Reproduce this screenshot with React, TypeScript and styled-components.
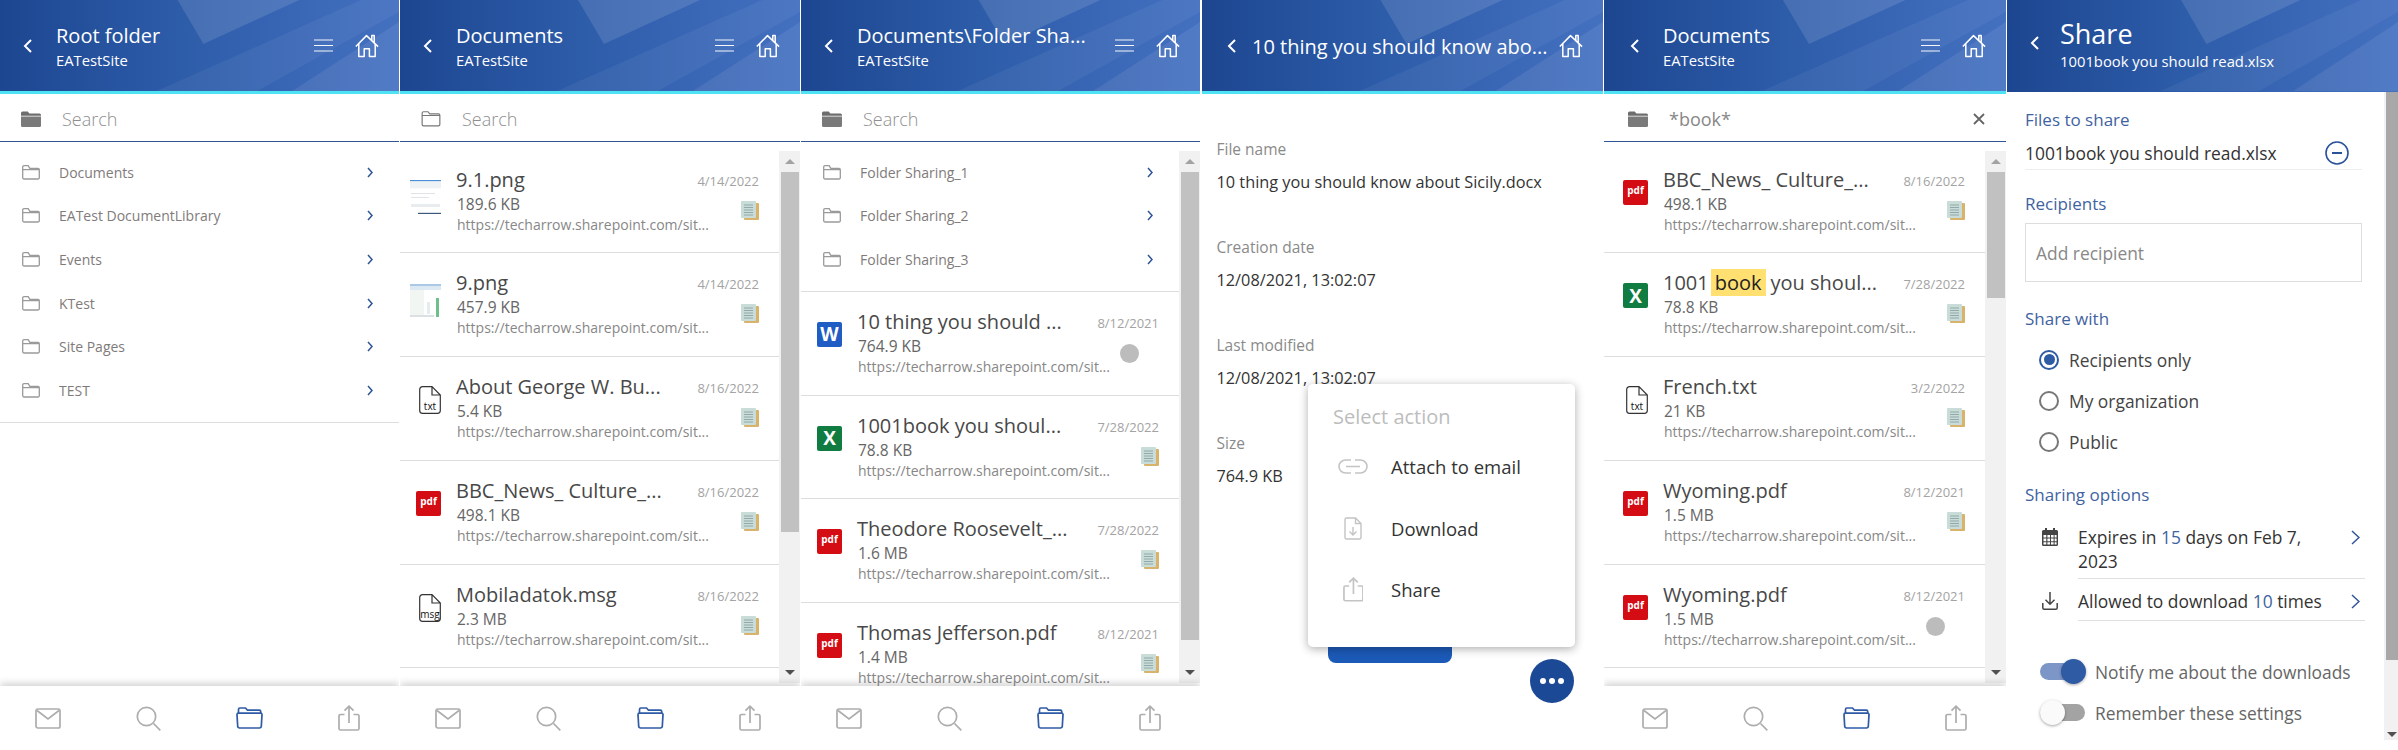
import React from "react";
import styled, { createGlobalStyle } from "styled-components";

const Global = createGlobalStyle`
  html, body { margin: 0; padding: 0; background: #fff; }
  body { font-family: "Open Sans", "Liberation Sans", sans-serif; overflow: hidden; }
  * { box-sizing: border-box; }
`;

const Page = styled.div`
  display: flex;
  width: 2398px;
  height: 750px;
  overflow: hidden;
`;

const Panel = styled.section<{ $w: number; $gap: number; $inset?: number }>`
  --inset: ${(p) => p.$inset ?? 0}px;
  position: relative;
  flex: none;
  width: ${(p) => p.$w}px;
  height: 750px;
  border-right: ${(p) => p.$gap}px solid #fff;
  display: flex;
  flex-direction: column;
  overflow: hidden;
  background: #fff;
`;

const HeaderBar = styled.header<{ $bare?: boolean }>`
  position: relative;
  flex: none;
  height: ${(p) => (p.$bare ? 92 : 94)}px;
  display: flex;
  align-items: center;
  padding: ${(p) => (p.$bare ? "0 20px 6px var(--inset)" : "0 20px 0 var(--inset)")};
  background: linear-gradient(90deg, #1d4690 0%, #2d5ca9 45%, #4470c0 100%);
  border-bottom: ${(p) => (p.$bare ? "0" : "3px solid #4de3f5")};
  color: #fff;
`;

const HeaderArt = styled.svg`
  position: absolute;
  inset: 0;
  width: 100%;
  height: 91px;
`;

const BackSlot = styled.div<{ $w?: number }>`
  position: relative;
  flex: none;
  width: ${(p) => p.$w ?? 56}px;
  padding-left: 23px;
  display: flex;
  align-items: center;
`;

const TitleBlock = styled.div`
  position: relative;
  flex: 1;
  min-width: 0;
  margin-top: 2px;
`;

const Title = styled.div<{ $big?: boolean }>`
  font-size: ${(p) => (p.$big ? 27 : 20)}px;
  line-height: ${(p) => (p.$big ? 32 : 26)}px;
  white-space: nowrap;
`;

const Subtitle = styled.div`
  font-size: 14.8px;
  line-height: 20px;
  margin-top: 1px;
  white-space: nowrap;
`;

const HeaderIcons = styled.div`
  position: relative;
  flex: none;
  display: flex;
  align-items: center;
  gap: 22px;
`;

const SearchBar = styled.div`
  flex: none;
  height: 48px;
  display: flex;
  align-items: center;
  padding: 3px 21px 0 calc(21px + var(--inset));
  gap: 21px;
  border-bottom: 1px solid #2f5597;
`;

const SearchText = styled.div<{ $filled?: boolean }>`
  flex: 1;
  font-size: 18px;
  font-weight: ${(p) => (p.$filled ? 400 : 300)};
  color: ${(p) => (p.$filled ? "#888" : "#8f8f8f")};
`;

const ListArea = styled.div`
  flex: 1;
  min-height: 0;
  display: flex;
  align-items: stretch;
`;

const List = styled.div`
  flex: 1;
  min-width: 0;
  padding-top: 7.5px;
`;

const FolderGroup = styled.div`
  padding: 1px 0 9.5px;
  border-bottom: 1px solid #ddd;
`;

const FolderRow = styled.div`
  height: 43.6px;
  display: flex;
  align-items: center;
  padding: 0 26px 0 calc(22px + var(--inset));
`;

const FolderName = styled.div`
  flex: 1;
  margin-left: 19px;
  font-size: 14px;
  color: #7f7b7b;
`;

const FileRow = styled.div`
  height: 103.75px;
  display: grid;
  grid-template-columns: 56px 1fr auto;
  padding: 0 20px 0 var(--inset);
  border-bottom: 1px solid #ddd;
`;

const FileIconCell = styled.div`
  display: flex;
  justify-content: flex-end;
  align-items: flex-start;
  padding: 30px 15px 0 0;
`;

const FileMain = styled.div`
  padding-top: 16px;
  min-width: 0;
  white-space: nowrap;
`;

const FileName = styled.div`
  font-size: 20px;
  line-height: 28px;
  color: #484848;
`;

const Mark = styled.mark`
  background: #ffe071;
  color: #222;
  padding: 0 4px;
  margin: 0 5px 0 2px;
`;

const FileSize = styled.div`
  font-size: 15.5px;
  line-height: 20px;
  color: #666;
  padding-left: 1px;
`;

const FileUrl = styled.div`
  font-size: 14px;
  line-height: 22px;
  color: #878787;
  padding-left: 1px;
`;

const FileSide = styled.div`
  display: flex;
  flex-direction: column;
  align-items: flex-end;
  padding-top: 21px;
`;

const FileDate = styled.div`
  font-size: 13px;
  line-height: 20px;
  color: #a3a3a3;
`;

const StatusDot = styled.div`
  width: 19px;
  height: 19px;
  margin: 11px 20px 0 0;
  border-radius: 50%;
  background: #bcbcbc;
`;

const NoteSlot = styled.div`
  margin-top: 10px;
  line-height: 0;
`;

const ScrollTrack = styled.div<{ $mb: number }>`
  flex: none;
  width: 21px;
  margin: 9px 0 ${(p) => p.$mb}px;
  padding: 0 1px 0 2px;
  background: #f1f1f1;
  display: flex;
  flex-direction: column;
`;

const ScrollUp = styled.div`
  flex: none;
  height: 21px;
  display: flex;
  align-items: center;
  justify-content: center;

  &::before {
    content: "";
    border-left: 5px solid transparent;
    border-right: 5px solid transparent;
    border-bottom: 5px solid #a3a3a3;
  }
`;

const ScrollThumb = styled.div<{ $h: number; $c?: string }>`
  flex: none;
  height: ${(p) => p.$h}px;
  background: ${(p) => p.$c ?? "#c1c1c1"};
`;

const ScrollGap = styled.div`
  flex: 1;
`;

const ScrollDown = styled.div<{ $h?: number }>`
  flex: none;
  height: ${(p) => p.$h ?? 21}px;
  display: flex;
  align-items: center;
  justify-content: center;

  &::before {
    content: "";
    border-left: 5px solid transparent;
    border-right: 5px solid transparent;
    border-top: 5px solid #505050;
  }
`;

const BottomBar = styled.nav`
  position: relative;
  flex: none;
  height: 64px;
  display: flex;
  align-items: center;
  justify-content: space-between;
  padding: 0 39px 0 calc(35px + var(--inset));
  background: #fff;
  box-shadow: 0 -3px 7px rgba(0, 0, 0, 0.17);
`;

const DetailBody = styled.div`
  flex: 1;
  padding: 44px 0 0 14.5px;
  display: flex;
  flex-direction: column;
`;

const DetailField = styled.div`
  margin-bottom: 42px;
`;

const DetailLabel = styled.div`
  font-size: 15.5px;
  line-height: 22px;
  color: #8a8a8a;
  margin-bottom: 10px;
`;

const DetailValue = styled.div`
  font-size: 16.3px;
  line-height: 24px;
  color: #333;
`;

const HiddenButton = styled.div`
  position: absolute;
  left: 126px;
  top: 620px;
  width: 124px;
  height: 43px;
  border-radius: 8px;
  background: #1c5ab8;
`;

const ActionMenu = styled.div`
  position: absolute;
  left: 106px;
  top: 384px;
  width: 267px;
  height: 263px;
  padding: 21px 0 0;
  border-radius: 5px;
  background: #fff;
  box-shadow: 0 2px 10px rgba(0, 0, 0, 0.32);
`;

const MenuTitle = styled.div`
  font-size: 20px;
  line-height: 24px;
  margin: 0 0 0 25px;
  color: #bdbdbd;
`;

const MenuItem = styled.div`
  height: 61.5px;
  display: flex;
  align-items: center;
  padding-left: 30px;
  gap: 23px;
  font-size: 18.5px;
  color: #333;
`;

const MenuItems = styled.div`
  margin-top: 7px;
`;

const MenuIcon = styled.div`
  width: 30px;
  display: flex;
  justify-content: center;
`;

const Fab = styled.div`
  position: absolute;
  left: 328px;
  top: 659px;
  width: 44px;
  height: 44px;
  border-radius: 50%;
  background: #1c4995;
  display: flex;
  align-items: center;
  justify-content: center;
  gap: 3px;
`;

const FabDot = styled.span`
  width: 6px;
  height: 6px;
  border-radius: 50%;
  background: #fff;
`;

const ShareBody = styled.div`
  flex: 1;
  min-height: 0;
  display: flex;
`;

const ShareForm = styled.div`
  flex: 1;
  min-width: 0;
  padding: 15px 0 0 18px;
`;

const SectionLabel = styled.div<{ $mt?: number }>`
  font-size: 17px;
  line-height: 26px;
  color: #3f639f;
  margin-top: ${(p) => p.$mt ?? 0}px;
`;

const ShareFileRow = styled.div`
  width: 337px;
  height: 37px;
  display: flex;
  align-items: center;
  justify-content: space-between;
  padding: 3px 13px 0 0;
  font-size: 17.4px;
  color: #333;
  border-bottom: 1px solid #eee;
`;

const RecipientBox = styled.div`
  width: 337px;
  height: 59px;
  margin-top: 6px;
  padding-left: 10px;
  display: flex;
  align-items: center;
  font-size: 17.4px;
  color: #888;
  border: 1px solid #ddd;
`;

const RadioGroup = styled.div`
  margin-top: 7px;
  padding-left: 14px;
`;

const RadioRow = styled.div`
  height: 41px;
  display: flex;
  align-items: center;
  gap: 10px;
  font-size: 17.4px;
  color: #444;
`;

const RadioMark = styled.span<{ $on?: boolean }>`
  width: 20px;
  height: 20px;
  border-radius: 50%;
  border: 2px solid ${(p) => (p.$on ? "#2f5ba5" : "#777")};
  display: flex;
  align-items: center;
  justify-content: center;

  &::after {
    content: "";
    display: ${(p) => (p.$on ? "block" : "none")};
    width: 11px;
    height: 11px;
    border-radius: 50%;
    background: #2f5ba5;
  }
`;

const OptionRow = styled.div<{ $h: number }>`
  display: flex;
  align-items: flex-start;
  padding-left: 17px;
  height: ${(p) => p.$h}px;
`;

const OptionIcon = styled.div<{ $pt?: number }>`
  flex: none;
  width: 36px;
  height: 24px;
  margin-top: ${(p) => p.$pt ?? 0}px;
  display: flex;
  align-items: center;
`;

const OptionBody = styled.div<{ $pt?: number }>`
  flex: 1;
  height: 100%;
  width: 287px;
  display: flex;
  align-items: flex-start;
  justify-content: space-between;
  padding: ${(p) => p.$pt ?? 0}px 5px 0 0;
  font-size: 17.4px;
  line-height: 24px;
  color: #333;
  border-bottom: 1px solid #e2dfe2;
`;

const OptionList = styled.div`
  width: 340px;
  margin-top: 17px;
`;

const OptionChevron = styled.div`
  flex: none;
  height: 24px;
  display: flex;
  align-items: center;
`;

const Accent = styled.span`
  color: #3f639f;
`;

const ToggleRow = styled.div<{ $mt?: number }>`
  height: 41px;
  display: flex;
  align-items: center;
  padding-left: 15px;
  gap: 10px;
  font-size: 17.4px;
  color: #666;
  margin-top: ${(p) => p.$mt ?? 0}px;
`;

const Toggle = styled.span<{ $on?: boolean }>`
  position: relative;
  flex: none;
  width: 45px;
  height: 17px;
  border-radius: 9px;
  background: ${(p) => (p.$on ? "#7d96c8" : "#a3a3a3")};

  &::after {
    content: "";
    position: absolute;
    top: -4px;
    left: ${(p) => (p.$on ? "21px" : "0")};
    width: 25px;
    height: 25px;
    border-radius: 50%;
    background: ${(p) => (p.$on ? "#2f5ba5" : "#fafafa")};
    box-shadow: 0 1px 3px rgba(0, 0, 0, 0.35);
  }
`;

const SideTrack = styled.div`
  flex: none;
  width: 14px;
  height: 648px;
  display: flex;
  flex-direction: column;
  background: #f1f1f1;
  padding-left: 2px;
`;

const Badge = styled.div<{ $c: string; $small?: boolean }>`
  width: 25px;
  height: 25px;
  border-radius: 2px;
  background: ${(p) => p.$c};
  color: #fff;
  display: flex;
  align-items: center;
  justify-content: center;
  font-family: "Open Sans", sans-serif;
  font-weight: 700;
  font-size: ${(p) => (p.$small ? 10 : 19)}px;
  padding-bottom: ${(p) => (p.$small ? 5 : 0)}px;
`;

const DocWrap = styled.div`
  position: relative;
  width: 22px;
  height: 28px;
  margin-top: -1px;
`;

const DocExt = styled.span`
  position: absolute;
  left: 0;
  right: 0;
  top: 13px;
  text-align: center;
  font-size: 10px;
  line-height: 14px;
  color: #111;
`;

const Chev = ({ c = "#2f5597", w = 6, h = 11, sw = 1.5 }: { c?: string; w?: number; h?: number; sw?: number }) => (
  <svg width={w} height={h} viewBox={`0 0 ${w} ${h}`}>
    <polyline points={`1,1 ${w - 1},${h / 2} 1,${h - 1}`} fill="none" stroke={c} strokeWidth={sw} />
  </svg>
);

const Back = () => (
  <svg width="9" height="14" viewBox="0 0 9 14">
    <polyline points="8,1 2,7 8,13" fill="none" stroke="#fff" strokeWidth="2" />
  </svg>
);

const Burger = () => (
  <svg width="19" height="13" viewBox="0 0 19 13">
    <path d="M0 1h19M0 6.5h19M0 12h19" stroke="#fff" strokeWidth="1" opacity="0.95" />
  </svg>
);

const Home = () => (
  <svg width="24" height="24" viewBox="0 0 24 24" fill="none" stroke="#fff" strokeWidth="1.5" strokeLinejoin="round">
    <path d="M.8 12.5 11.5 1.6l11.6 11M16.8 6.5V1.4h2.4v7.6" />
    <path d="M3.8 10v12.4h5.4v-7.6h5.2v7.6h5.8V10" />
  </svg>
);

const FolderLine = ({ c = "#9a9a9a" }: { c?: string }) => (
  <svg width="18" height="15" viewBox="0 0 18 15" fill="none" stroke={c} strokeWidth="1.3">
    <path d="M.7 12.7V2A1.3 1.3 0 0 1 2 .7h4.2l1.6 2.6H16a1.3 1.3 0 0 1 1.3 1.3v8.1A1.3 1.3 0 0 1 16 14H2a1.3 1.3 0 0 1-1.3-1.3ZM.7 4.6h16.6" />
  </svg>
);

const FolderSearchLine = () => (
  <svg width="20" height="16" viewBox="0 0 18 15" fill="none" stroke="#777" strokeWidth="1.1">
    <path d="M.7 12.7V2A1.3 1.3 0 0 1 2 .7h4.2l1.6 2H16a1.3 1.3 0 0 1 1.3 1.3v8.7A1.3 1.3 0 0 1 16 14H2a1.3 1.3 0 0 1-1.3-1.3ZM.7 4.2h16.6" />
  </svg>
);

const FolderFull = () => (
  <svg width="20" height="16" viewBox="0 0 20 16">
    <path d="M0 2a1.5 1.5 0 0 1 1.5-1.5h5.2L8.4 2.6h10.1A1.5 1.5 0 0 1 20 4.1v.6H0Z" fill="#6d6d6d" />
    <path d="M0 5.6h20v8.9a1.5 1.5 0 0 1-1.5 1.5h-17A1.5 1.5 0 0 1 0 14.5Z" fill="#7a7a7a" />
  </svg>
);

const Mail = () => (
  <svg width="26" height="21" viewBox="0 0 26 21" fill="none" stroke="#adadad" strokeWidth="1.7">
    <rect x="1" y="1" width="24" height="19" rx="1.8" />
    <path d="M2 2.5 13 11 24 2.5" />
  </svg>
);

const Lens = () => (
  <svg width="25" height="25" viewBox="0 0 25 25" fill="none" stroke="#adadad" strokeWidth="1.7">
    <circle cx="10.5" cy="10.5" r="9.2" />
    <path d="m17.5 17.5 6.8 6.8" />
  </svg>
);

const OpenFolder = () => (
  <svg width="27" height="22" viewBox="0 0 27 22" fill="none" stroke="#2f5ba5" strokeWidth="1.7" strokeLinejoin="round">
    <path d="M2.5 6V2.4A1.4 1.4 0 0 1 3.9 1h5.6l2 2.2h11.8A1.4 1.4 0 0 1 24.7 4.6V7" />
    <path d="M1 7.6A1.4 1.4 0 0 1 2.4 6.2h22.2A1.4 1.4 0 0 1 26 7.6l-.7 11.6a1.8 1.8 0 0 1-1.8 1.8H3.5a1.8 1.8 0 0 1-1.8-1.8Z" />
  </svg>
);

const ShareGlyph = ({ c = "#adadad", s = 1 }: { c?: string; s?: number }) => (
  <svg width={22 * s} height={26 * s} viewBox="0 0 22 26" fill="none" stroke={c} strokeWidth={1.7 / s}>
    <path d="M6.5 9.5H2.6A1.6 1.6 0 0 0 1 11.1v12.3A1.6 1.6 0 0 0 2.6 25h16.8a1.6 1.6 0 0 0 1.6-1.6V11.1a1.6 1.6 0 0 0-1.6-1.6h-3.9" />
    <path d="M11 18V1.4M6.5 5.6 11 1.2l4.5 4.4" />
  </svg>
);

const LinkGlyph = () => (
  <svg width="30" height="15" viewBox="0 0 30 15" fill="none" stroke="#c4c4c4" strokeWidth="1.6">
    <path d="M13 1H7.5a6.5 6.5 0 0 0 0 13H13M17 1h5.5a6.5 6.5 0 0 1 0 13H17M8 7.5h14" />
  </svg>
);

const FileDown = () => (
  <svg width="18" height="23" viewBox="0 0 18 23" fill="none" stroke="#c4c4c4" strokeWidth="1.4">
    <path d="M11.5 1H2.4A1.4 1.4 0 0 0 1 2.4v18.2A1.4 1.4 0 0 0 2.4 22h13.2a1.4 1.4 0 0 0 1.4-1.4V6.5Zm0 0v5.5H17" />
    <path d="M9 10v8M5.5 14.5 9 18l3.5-3.5" />
  </svg>
);

const Note = () => (
  <svg width="18" height="19" viewBox="0 0 18 19">
    <rect x="3" y="2" width="15" height="17" rx="1" fill="#d9b36b" />
    <rect x="0" y="0" width="15" height="17" rx="1" fill="#c9dcd8" />
    <path d="M3 4h9M3 6.5h9M3 9h9M3 11.5h9M3 14h9" stroke="#8aa3a6" strokeWidth="0.9" />
  </svg>
);

const ThumbA = () => (
  <svg width="31" height="34" viewBox="0 0 31 34">
    <rect width="31" height="1.4" fill="#4d8fd6" />
    <rect y="1.4" width="31" height="7" fill="#eef2f5" />
    <rect x="1" y="13" width="24" height="1" fill="#dfe3e6" />
    <rect x="1" y="17" width="18" height="1" fill="#e2e5e8" />
    <rect x="1" y="24" width="29" height="3" fill="#e8ecee" />
    <rect x="8" y="32.8" width="23" height="1.2" fill="#3c5a80" />
  </svg>
);

const ThumbB = () => (
  <svg width="31" height="34" viewBox="0 0 31 34" style={{ marginTop: 1 }}>
    <rect width="31" height="2" fill="#a9c9e6" />
    <rect y="2" width="31" height="4" fill="#dce9f2" />
    <rect y="6" width="14" height="26" fill="#f2f6f3" />
    <rect x="26" y="14" width="3" height="19" fill="#6fbf8c" />
    <rect x="17" y="18" width="3" height="12" fill="#e5ecee" />
    <rect y="31" width="24" height="2" fill="#dbe0e2" />
  </svg>
);

const Doc = ({ ext }: { ext: string }) => (
  <DocWrap>
    <svg width="22" height="28" viewBox="0 0 22 28" fill="none" stroke="#333" strokeWidth="1.2">
      <path d="M13 .7H3.5A2.8 2.8 0 0 0 .7 3.5v21a2.8 2.8 0 0 0 2.8 2.8h15a2.8 2.8 0 0 0 2.8-2.8V9ZM13 .7V9h8.3" />
    </svg>
    <DocExt>{ext}</DocExt>
  </DocWrap>
);

const Pdf = () => <Badge $c="#d40c14" $small>pdf</Badge>;

const HeaderPattern = () => (
  <HeaderArt viewBox="0 0 400 91" preserveAspectRatio="none">
    <polygon points="178,0 204,44 300,0" fill="#fff" opacity="0.12" />
    <polygon points="157,91 362,0 400,0 400,12 258,91" fill="#fff" opacity="0.05" />
    <polygon points="293,91 400,22 400,91" fill="#fff" opacity="0.08" />
  </HeaderArt>
);

const AppHeader = ({ title, sub, burger = true }: { title: string; sub?: string; burger?: boolean }) => (
  <HeaderBar>
    <HeaderPattern />
    <BackSlot $w={sub ? 56 : 48}>
      <Back />
    </BackSlot>
    <TitleBlock>
      <Title>{title}</Title>
      {sub && <Subtitle>{sub}</Subtitle>}
    </TitleBlock>
    <HeaderIcons>
      {burger && <Burger />}
      <Home />
    </HeaderIcons>
  </HeaderBar>
);

const Search = ({ text = "Search", icon = "full", close }: { text?: string; icon?: string; close?: boolean }) => (
  <SearchBar>
    {icon === "full" ? <FolderFull /> : <FolderSearchLine />}
    <SearchText $filled={text !== "Search"}>{text}</SearchText>
    {close && (
      <svg width="12" height="12" viewBox="0 0 12 12">
        <path d="M1 1l10 10M11 1 1 11" stroke="#666" strokeWidth="1.8" />
      </svg>
    )}
  </SearchBar>
);

const Bottom = () => (
  <BottomBar>
    <Mail />
    <Lens />
    <OpenFolder />
    <ShareGlyph />
  </BottomBar>
);

const Scroll = ({ thumb, mb = 3 }: { thumb: number; mb?: number }) => (
  <ScrollTrack $mb={mb}>
    <ScrollUp />
    <ScrollThumb $h={thumb} />
    <ScrollGap />
    <ScrollDown />
  </ScrollTrack>
);

type FileData = { icon: React.ReactNode; name: React.ReactNode; size: string; date: string; dot?: boolean };

const URL_TEXT = "https://techarrow.sharepoint.com/sit...";

const File = ({ icon, name, size, date, dot }: FileData) => (
  <FileRow>
    <FileIconCell>{icon}</FileIconCell>
    <FileMain>
      <FileName>{name}</FileName>
      <FileSize>{size}</FileSize>
      <FileUrl>{URL_TEXT}</FileUrl>
    </FileMain>
    <FileSide>
      <FileDate>{date}</FileDate>
      {dot ? (
        <StatusDot />
      ) : (
        <NoteSlot>
          <Note />
        </NoteSlot>
      )}
    </FileSide>
  </FileRow>
);

const Folder = ({ name }: { name: string }) => (
  <FolderRow>
    <FolderLine />
    <FolderName>{name}</FolderName>
    <Chev />
  </FolderRow>
);

const Fields = [
  ["File name", "10 thing you should know about Sicily.docx"],
  ["Creation date", "12/08/2021, 13:02:07"],
  ["Last modified", "12/08/2021, 13:02:07"],
  ["Size", "764.9 KB"],
];

export default function App() {
  return (
    <Page>
      <Global />

      <Panel $w={400} $gap={1}>
        <AppHeader title="Root folder" sub="EATestSite" />
        <Search />
        <ListArea>
          <List>
            <FolderGroup>
              {["Documents", "EATest DocumentLibrary", "Events", "KTest", "Site Pages", "TEST"].map((n) => (
                <Folder key={n} name={n} />
              ))}
            </FolderGroup>
          </List>
        </ListArea>
        <Bottom />
      </Panel>

      <Panel $w={401} $gap={1}>
        <AppHeader title="Documents" sub="EATestSite" />
        <Search icon="line" />
        <ListArea>
          <List>
            <File icon={<ThumbA />} name="9.1.png" size="189.6 KB" date="4/14/2022" />
            <File icon={<ThumbB />} name="9.png" size="457.9 KB" date="4/14/2022" />
            <File icon={<Doc ext="txt" />} name="About George W. Bu..." size="5.4 KB" date="8/16/2022" />
            <File icon={<Pdf />} name="BBC_News_ Culture_..." size="498.1 KB" date="8/16/2022" />
            <File icon={<Doc ext="msg" />} name="Mobiladatok.msg" size="2.3 MB" date="8/16/2022" />
          </List>
          <Scroll thumb={360} />
        </ListArea>
        <Bottom />
      </Panel>

      <Panel $w={401} $gap={2}>
        <AppHeader title="Documents\Folder Sha..." sub="EATestSite" />
        <Search />
        <ListArea>
          <List>
            <FolderGroup>
              {["Folder Sharing_1", "Folder Sharing_2", "Folder Sharing_3"].map((n) => (
                <Folder key={n} name={n} />
              ))}
            </FolderGroup>
            <File icon={<Badge $c="#1f5cc4">W</Badge>} name="10 thing you should ..." size="764.9 KB" date="8/12/2021" dot />
            <File icon={<Badge $c="#107c41">X</Badge>} name="1001book you shoul..." size="78.8 KB" date="7/28/2022" />
            <File icon={<Pdf />} name="Theodore Roosevelt_..." size="1.6 MB" date="7/28/2022" />
            <File icon={<Pdf />} name="Thomas Jefferson.pdf" size="1.4 MB" date="8/12/2021" />
          </List>
          <Scroll thumb={468} />
        </ListArea>
        <Bottom />
      </Panel>

      <Panel $w={402} $gap={1} $inset={2}>
        <AppHeader title="10 thing you should know abo..." burger={false} />
        <DetailBody>
          {Fields.map(([label, value]) => (
            <DetailField key={label}>
              <DetailLabel>{label}</DetailLabel>
              <DetailValue>{value}</DetailValue>
            </DetailField>
          ))}
        </DetailBody>
        <HiddenButton />
        <ActionMenu>
          <MenuTitle>Select action</MenuTitle>
          <MenuItems>
            <MenuItem>
              <MenuIcon>
                <LinkGlyph />
              </MenuIcon>
              Attach to email
            </MenuItem>
            <MenuItem>
              <MenuIcon>
                <FileDown />
              </MenuIcon>
              Download
            </MenuItem>
            <MenuItem>
              <MenuIcon>
                <ShareGlyph c="#c4c4c4" s={0.95} />
              </MenuIcon>
              Share
            </MenuItem>
          </MenuItems>
        </ActionMenu>
        <Fab>
          <FabDot />
          <FabDot />
          <FabDot />
        </Fab>
      </Panel>

      <Panel $w={403} $gap={1} $inset={3}>
        <AppHeader title="Documents" sub="EATestSite" />
        <Search text="*book*" close />
        <ListArea>
          <List>
            <File icon={<Pdf />} name="BBC_News_ Culture_..." size="498.1 KB" date="8/16/2022" />
            <File
              icon={<Badge $c="#107c41">X</Badge>}
              name={
                <>
                  1001<Mark>book</Mark>you shoul...
                </>
              }
              size="78.8 KB"
              date="7/28/2022"
            />
            <File icon={<Doc ext="txt" />} name="French.txt" size="21 KB" date="3/2/2022" />
            <File icon={<Pdf />} name="Wyoming.pdf" size="1.5 MB" date="8/12/2021" />
            <File icon={<Pdf />} name="Wyoming.pdf" size="1.5 MB" date="8/12/2021" dot />
          </List>
          <Scroll thumb={126} />
        </ListArea>
        <Bottom />
      </Panel>

      <Panel $w={391} $gap={0}>
        <HeaderBar $bare>
          <HeaderPattern />
          <BackSlot $w={53}>
            <Back />
          </BackSlot>
          <TitleBlock>
            <Title $big>Share</Title>
            <Subtitle>1001book you should read.xlsx</Subtitle>
          </TitleBlock>
        </HeaderBar>
        <ShareBody>
          <ShareForm>
            <SectionLabel>Files to share</SectionLabel>
            <ShareFileRow>
              1001book you should read.xlsx
              <svg width="24" height="24" viewBox="0 0 24 24" fill="none" stroke="#2a5298" strokeWidth="1.6">
                <circle cx="12" cy="12" r="11" />
                <path d="M7 12h10" strokeWidth="2" />
              </svg>
            </ShareFileRow>
            <SectionLabel $mt={21}>Recipients</SectionLabel>
            <RecipientBox>Add recipient</RecipientBox>
            <SectionLabel $mt={24}>Share with</SectionLabel>
            <RadioGroup>
              <RadioRow>
                <RadioMark $on />
                Recipients only
              </RadioRow>
              <RadioRow>
                <RadioMark />
                My organization
              </RadioRow>
              <RadioRow>
                <RadioMark />
                Public
              </RadioRow>
            </RadioGroup>
            <SectionLabel $mt={20}>Sharing options</SectionLabel>
            <OptionList>
              <OptionRow $h={54}>
                <OptionIcon>
                  <svg width="16" height="18" viewBox="0 0 16 18" fill="#444">
                    <path d="M3 0h2v2h6V0h2v2h1.5A1.5 1.5 0 0 1 16 3.5v13a1.5 1.5 0 0 1-1.5 1.5h-13A1.5 1.5 0 0 1 0 16.5v-13A1.5 1.5 0 0 1 1.5 2H3Z" />
                    <path d="M1.5 7h2.8v2.6H1.5zM5.4 7h2.6v2.6H5.4zM9 7h2.6v2.6H9zM12.6 7h2v2.6h-2zM1.5 10.6h2.8v2.6H1.5zM5.4 10.6h2.6v2.6H5.4zM9 10.6h2.6v2.6H9zM12.6 10.6h2v2.6h-2zM1.5 14.2h2.8v2.4H1.5zM5.4 14.2h2.6v2.4H5.4zM9 14.2h2.6v2.4H9zM12.6 14.2h2v2.4h-2z" fill="#fff" />
                  </svg>
                </OptionIcon>
                <OptionBody>
                  <div>
                    Expires in <Accent>15</Accent> days on Feb 7,
                    <br />
                    2023
                  </div>
                  <OptionChevron>
                    <Chev w={9} h={15} />
                  </OptionChevron>
                </OptionBody>
              </OptionRow>
              <OptionRow $h={42}>
                <OptionIcon $pt={10}>
                  <svg width="16" height="18" viewBox="0 0 16 18" fill="none" stroke="#444" strokeWidth="1.5">
                    <path d="M8 0v12M3.5 7.8 8 12.2l4.5-4.4M.8 11v4.7c0 .9.7 1.5 1.5 1.5h11.4c.8 0 1.5-.6 1.5-1.5V11" />
                  </svg>
                </OptionIcon>
                <OptionBody $pt={10}>
                  <div>
                    Allowed to download <Accent>10</Accent> times
                  </div>
                  <OptionChevron>
                    <Chev w={9} h={15} />
                  </OptionChevron>
                </OptionBody>
              </OptionRow>
            </OptionList>
            <ToggleRow $mt={30}>
              <Toggle $on />
              Notify me about the downloads
            </ToggleRow>
            <ToggleRow>
              <Toggle />
              Remember these settings
            </ToggleRow>
          </ShareForm>
          <SideTrack>
            <ScrollThumb $h={568} $c="#a8a8a8" />
            <ScrollGap />
            <ScrollDown $h={11} />
          </SideTrack>
        </ShareBody>
      </Panel>
    </Page>
  );
}
